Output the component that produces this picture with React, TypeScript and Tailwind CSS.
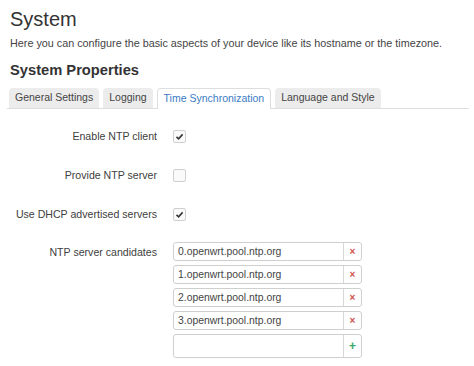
import React from "react"

const tabs = ["General Settings", "Logging", "Time Synchronization", "Language and Style"]
const servers = ["0.openwrt.pool.ntp.org", "1.openwrt.pool.ntp.org", "2.openwrt.pool.ntp.org", "3.openwrt.pool.ntp.org"]

function Check({ checked }: { checked: boolean }) {
    return (
        <div className="w-[13px] h-[13px] rounded-[2px] border border-[#cfcfcf] bg-[#fafafa] flex items-center justify-center">
            {checked && (
                <svg width="9" height="9" viewBox="0 0 9 9">
                    <polyline points="1.5,4.8 3.6,6.8 7.6,2.4" fill="none" stroke="#333" strokeWidth="1.6" />
                </svg>
            )}
        </div>
    )
}

function Row({ label, children }: { label: string; children: React.ReactNode }) {
    return (
        <div className="flex items-center h-[39px]">
            <div className="w-[157px] text-right text-[10.6px] text-[#404040]">{label}</div>
            <div className="ml-[16px]">{children}</div>
        </div>
    )
}

export default function App() {
    return (
        <div className="w-[474px] h-[366px] bg-white overflow-hidden" style={{ fontFamily: '"Liberation Sans", Arial, sans-serif' }}>
            <div className="pl-[10px] pt-[7px]">
                <h2 className="text-[20px] leading-[24px] text-[#333]">System</h2>
                <p className="mt-[5px] text-[10.8px] leading-[14px] text-[#444]">
                    Here you can configure the basic aspects of your device like its hostname or the timezone.
                </p>
                <h3 className="mt-[11px] text-[14.7px] leading-[18px] font-bold text-[#333]">System Properties</h3>
            </div>

            {/* TABS */}
            <div className="mt-[9px] ml-[7px] w-[460px] h-[20px] border-b border-[#dedede] flex gap-[4px] pl-[2px] box-content">
                {tabs.map((t, i) => (
                    <div
                        key={t}
                        className={
                            i === 2
                                ? "h-[21px] px-[6px] flex items-center text-[10.5px] rounded-t-[4px] border border-b-0 border-[#dedede] bg-white text-[#3b7cc4]"
                                : "h-[20px] px-[6px] flex items-center text-[10.5px] rounded-t-[4px] bg-[#ececec] text-[#444]"
                        }
                    >
                        {t}
                    </div>
                ))}
            </div>

            {/* FORM */}
            <div className="mt-[8px]">
                <Row label="Enable NTP client"><Check checked={true} /></Row>
                <Row label="Provide NTP server"><Check checked={false} /></Row>
                <Row label="Use DHCP advertised servers"><Check checked={true} /></Row>

                <div className="flex items-start mt-[8px]">
                    <div className="w-[157px] h-[19px] pt-[3px] flex items-center justify-end text-[10.6px] text-[#404040]">NTP server candidates</div>
                    <div className="ml-[16px] flex flex-col gap-[4px]">
                        {servers.map((s) => (
                            <div key={s} className="flex w-[189px] h-[19px] border border-[#cfcfcf] rounded-[3px]">
                                <div className="flex-1 flex items-center pl-[4px] text-[10.4px] text-[#444]">{s}</div>
                                <div className="w-[18px] border-l border-[#d8d8d8] flex items-center justify-center text-[#d0534f] text-[10px] font-bold">×</div>
                            </div>
                        ))}
                        <div className="flex w-[189px] h-[24px] border border-[#cfcfcf] rounded-[3px]">
                            <div className="flex-1" />
                            <div className="w-[18px] border-l border-[#d8d8d8] flex items-center justify-center text-[#3aa86a] text-[12px] font-bold">+</div>
                        </div>
                    </div>
                </div>
            </div>
        </div>
    )
}
